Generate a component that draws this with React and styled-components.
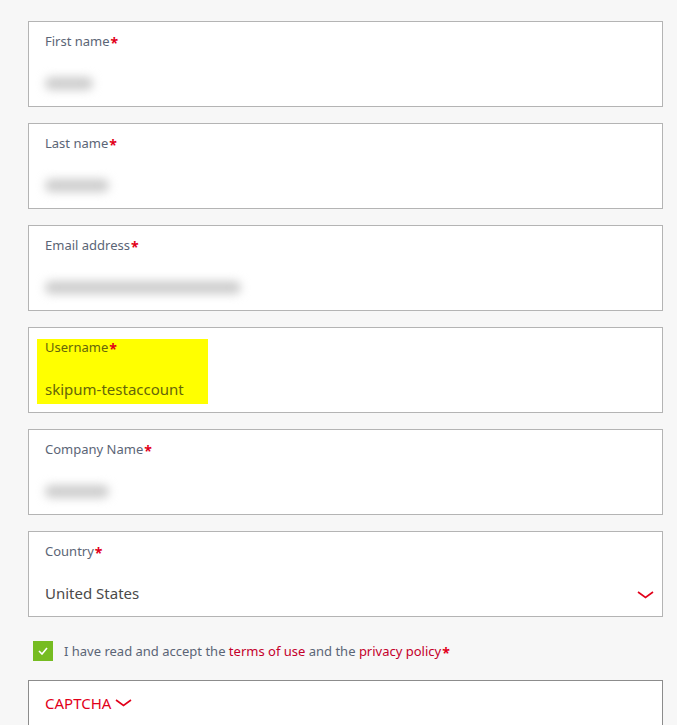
import React from 'react';
import styled, { createGlobalStyle } from 'styled-components';

const GlobalStyle = createGlobalStyle`
  html, body {
    margin: 0;
    padding: 0;
    background: #f7f7f7;
    font-family: "Noto Sans", "Liberation Sans", Arial, sans-serif;
  }
`;

const Page = styled.div`
  width: 677px;
  height: 725px;
  overflow: hidden;
  box-sizing: border-box;
  padding: 21px 14px 0 28px;
  display: flex;
  flex-direction: column;
  gap: 16px;
`;

const FieldBox = styled.div`
  position: relative;
  flex-shrink: 0;
  box-sizing: border-box;
  height: 86px;
  background: #ffffff;
  border: 1px solid #b4b4b4;
  padding: 11px 16px 0 8px;
  display: flex;
  align-items: flex-start;
`;

const Content = styled.div`
  display: flex;
  flex-direction: column;
  box-sizing: border-box;
  padding: 0 8px 4px;
  min-width: 171px;
  background: ${(p) => (p.$highlight ? '#ffff00' : 'transparent')};
`;

const Label = styled.div`
  font-size: 13px;
  line-height: 16px;
  height: 16px;
  color: ${(p) => (p.$highlight ? '#65650a' : '#5b6576')};
  white-space: nowrap;
`;

const Star = styled.span`
  color: #e2001a;
  font-weight: 700;
  font-size: 14px;
  line-height: 0;
  position: relative;
  top: 2px;
  margin-left: 1px;
`;

const Value = styled.div`
  margin-top: 23px;
  height: 22px;
  font-size: 15px;
  line-height: 22px;
  color: ${(p) => (p.$highlight ? '#65650a' : '#4a4a4a')};
  white-space: nowrap;
  display: flex;
  align-items: center;
`;

const Blurred = styled.span`
  display: block;
  width: ${(p) => p.$w}px;
  height: 13px;
  border-radius: 6px;
  background: #cdcdcd;
  filter: blur(5px);
`;

const Chevron = styled.svg`
  position: absolute;
  right: 8px;
  bottom: 17px;
`;

const ConsentRow = styled.div`
  flex-shrink: 0;
  display: flex;
  align-items: center;
  gap: 11px;
  padding: 8px 0 0 5px;
  height: 20px;
  font-size: 13px;
  color: #5b6576;
`;

const CheckBox = styled.span`
  width: 20px;
  height: 20px;
  background: #76bc21;
  display: flex;
  align-items: center;
  justify-content: center;
  flex-shrink: 0;
`;

const Link = styled.a`
  color: #c4002b;
  text-decoration: none;
`;

const CaptchaBox = styled.div`
  flex-shrink: 0;
  box-sizing: border-box;
  height: 60px;
  margin-top: 3px;
  background: #ffffff;
  border: 1px solid #8c8c8c;
  border-bottom: none;
  padding: 11px 16px;
  display: flex;
  align-items: flex-start;
  gap: 4px;
  font-size: 15px;
  line-height: 22px;
  color: #e2001a;
`;

const ArrowWrap = styled.span`
  display: flex;
  margin-top: 7px;
`;

const fields = [
  { label: 'First name', blur: 48 },
  { label: 'Last name', blur: 64 },
  { label: 'Email address', blur: 196 },
  { label: 'Username', value: 'skipum-testaccount', highlight: true },
  { label: 'Company Name', blur: 64 },
  { label: 'Country', value: 'United States', select: true },
];

function Arrow() {
  return (
    <svg width="17" height="8" viewBox="0 0 17 8">
      <polyline points="1,1 8.5,6.5 16,1" fill="none" stroke="#e2001a" strokeWidth="1.6" />
    </svg>
  );
}

export default function App() {
  return (
    <>
      <GlobalStyle />
      <Page>
        {fields.map((f) => (
          <FieldBox key={f.label}>
            <Content $highlight={f.highlight}>
              <Label $highlight={f.highlight}>
                {f.label}
                <Star>*</Star>
              </Label>
              <Value $highlight={f.highlight}>
                {f.value ? f.value : <Blurred $w={f.blur} />}
              </Value>
            </Content>
            {f.select && (
              <Chevron width="17" height="8" viewBox="0 0 17 8">
                <polyline points="1,1 8.5,6.5 16,1" fill="none" stroke="#e2001a" strokeWidth="1.6" />
              </Chevron>
            )}
          </FieldBox>
        ))}
        <ConsentRow>
          <CheckBox>
            <svg width="10" height="8" viewBox="0 0 10 8">
              <polyline points="1,4 4,7 9,1" fill="none" stroke="#ffffff" strokeWidth="1.6" />
            </svg>
          </CheckBox>
          <span>
            I have read and accept the <Link href="#">terms of use</Link> and the{' '}
            <Link href="#">privacy policy</Link>
            <Star>*</Star>
          </span>
        </ConsentRow>
        <CaptchaBox>
          CAPTCHA
          <ArrowWrap>
            <Arrow />
          </ArrowWrap>
        </CaptchaBox>
      </Page>
    </>
  );
}
